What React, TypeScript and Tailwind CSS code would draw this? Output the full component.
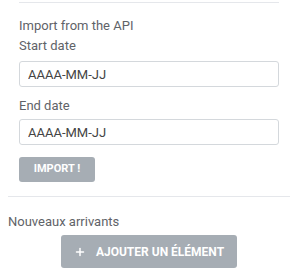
import { Plus } from "lucide-react"

export default function App() {
  return (
    <div className="w-[298px] h-[271px] bg-white px-2 pt-[2px] font-['Roboto',sans-serif] text-[13px] text-[#5f6368]">
      <div className="px-[11px]">
        <div className="border-t border-[#e5e7eb] pt-[14px]">
          <p className="leading-[18px]">Import from the API</p>
          <p className="leading-[18px] mt-[2px]">Start date</p>
          <input
            placeholder="AAAA-MM-JJ"
            className="mt-[6px] w-[260px] h-[26px] border border-[#d4d8dc] rounded-[3px] px-[8px] text-[13px] placeholder-[#444] text-[#444] outline-none"
          />
          <p className="leading-[18px] mt-[10px]">End date</p>
          <input
            placeholder="AAAA-MM-JJ"
            className="mt-[4px] w-[260px] h-[26px] border border-[#d4d8dc] rounded-[3px] px-[8px] text-[13px] placeholder-[#444] text-[#444] outline-none"
          />
          <button className="mt-[12px] w-[76px] h-[25px] rounded-[3px] bg-[#a6adb4] text-white text-[11px] font-bold uppercase">
            Import !
          </button>
        </div>
      </div>
      <div className="border-t border-[#e5e7eb] mt-[14px] pt-[16px]">
        <p className="leading-[18px]">Nouveaux arrivants</p>
        <div className="flex justify-center mt-[4px]">
          <button className="w-[176px] h-[33px] rounded-[3px] bg-[#a6adb4] text-white text-[12px] font-bold uppercase flex items-center justify-center gap-[10px]">
            <Plus className="w-[12px] h-[12px]" strokeWidth={3} />
            Ajouter un élément
          </button>
        </div>
      </div>
    </div>
  )
}
